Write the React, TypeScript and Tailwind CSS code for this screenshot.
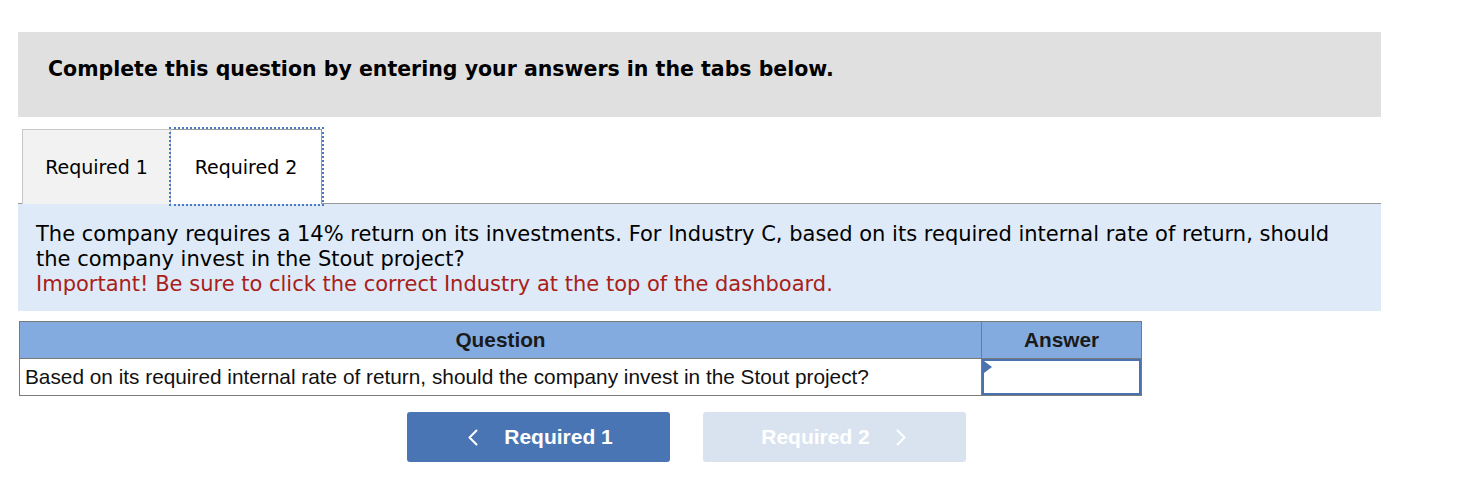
const verdana = "font-['DejaVu_Sans',Verdana,sans-serif]";
const arial = "font-['Liberation_Sans',Arial,sans-serif]";

function Chevron({ dir }: { dir: 'left' | 'right' }) {
  return (
    <svg width="10" height="17" viewBox="0 0 10 17" fill="none" stroke="currentColor" strokeWidth="2" strokeLinecap="round" strokeLinejoin="round">
      {dir === 'left' ? <polyline points="8.5,1.5 1.5,8.5 8.5,15.5" /> : <polyline points="1.5,1.5 8.5,8.5 1.5,15.5" />}
    </svg>
  );
}

export default function App() {
  return (
    <div className="w-[1478px] h-[496px] bg-white pt-[32px] pl-[18px]">
      {/* Instructions */}
      <div className={`w-[1363px] h-[85px] bg-[#e0e0e0] pl-[30px] pt-[25px] leading-[24px] text-[20.5px] font-bold text-black ${verdana}`}>
        Complete this question by entering your answers in the tabs below.
      </div>

      {/* Tabs */}
      <div className={`w-[1363px] mt-[12px] h-[75px] flex items-end border-b border-[#9a9a9a] pl-[4px] ${verdana}`}>
        <button className="h-[75px] w-[149px] -mb-px bg-[#f2f2f2] border border-b-0 border-[#c8c8c8] pt-[1px] text-[19px] text-black">
          Required 1
        </button>
        <button className="h-[75px] w-[151px] -mb-px bg-white border-t border-r border-[#9a9a9a] pt-[1px] text-[19px] text-black outline-2 outline-dotted outline-[#4a78c2] outline-offset-0">
          Required 2
        </button>
      </div>

      {/* Prompt */}
      <div className={`w-[1363px] h-[107px] bg-[#deeaf7] pl-[18px] pr-[40px] pt-[18px] text-[21px] leading-[25px] text-black ${verdana}`}>
        <p>
          The company requires a 14% return on its investments. For Industry C, based on its required internal rate of return, should
          the company invest in the Stout project?
        </p>
        <p className="text-[#a8201a]">Important! Be sure to click the correct Industry at the top of the dashboard.</p>
      </div>

      {/* Table */}
      <table className={`mt-[10px] ml-px w-[1123px] border-collapse text-[20.8px] ${arial}`}>
        <thead>
          <tr className="h-[37px] bg-[#84abdf]">
            <th className="border border-[#7a7a7a] font-bold text-[#1a1a1a] w-[962px]">Question</th>
            <th className="border border-[#7a7a7a] font-bold text-[#1a1a1a]">Answer</th>
          </tr>
        </thead>
        <tbody>
          <tr className="h-[37px]">
            <td className="border border-[#7a7a7a] pl-[5px] text-left text-[#111]">
              Based on its required internal rate of return, should the company invest in the Stout project?
            </td>
            <td className="border border-[#7a7a7a] p-0 relative">
              <div className="h-[36px] border-2 border-[#4a72b0] bg-white" />
              <span className="absolute left-[2px] top-[2px] w-0 h-0 border-y-[6px] border-y-transparent border-l-[8px] border-l-[#4a72b0]" />
            </td>
          </tr>
        </tbody>
      </table>

      {/* Navigation */}
      <div className={`mt-[16px] ml-[389px] flex gap-[33px] ${arial}`}>
        <button className="w-[263px] h-[50px] rounded-[3px] bg-[#4a75b4] text-white text-[21px] font-bold flex items-center justify-center gap-[26px] pl-[4px]">
          <Chevron dir="left" />
          <span>Required 1</span>
        </button>
        <button className="w-[263px] h-[50px] rounded-[3px] bg-[#d9e3ef] text-white text-[21px] font-bold flex items-center justify-center gap-[26px] pr-[2px]">
          <span>Required 2</span>
          <Chevron dir="right" />
        </button>
      </div>
    </div>
  );
}
